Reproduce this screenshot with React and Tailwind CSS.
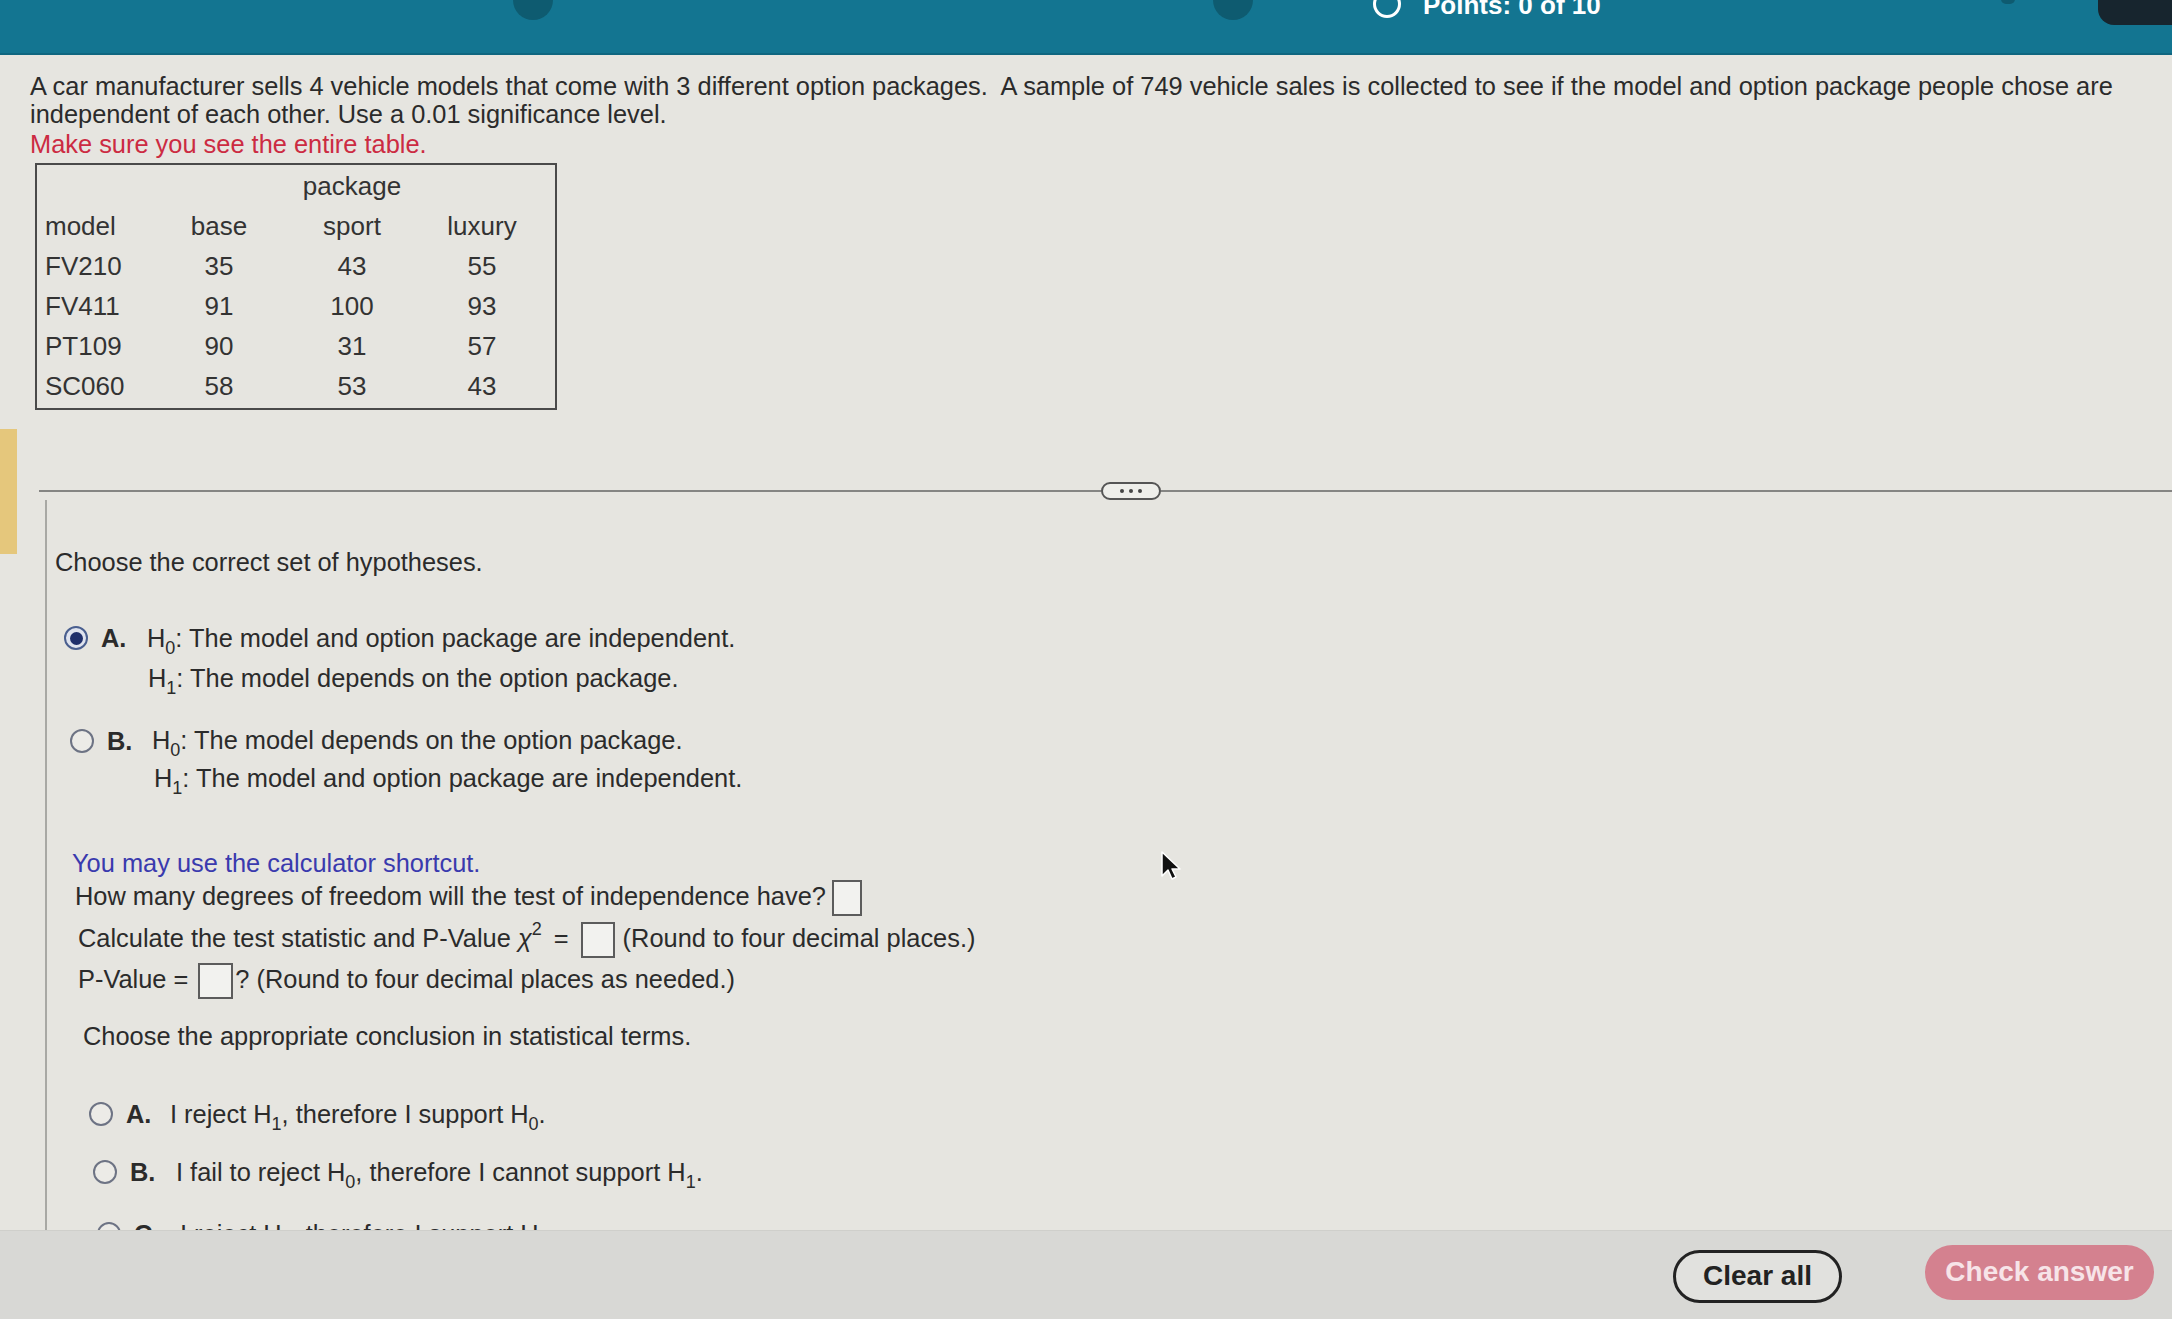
import React from 'react';

const Sub = ({ children }) => <span className="relative top-[7px] text-[18px] leading-none">{children}</span>;

const Radio = ({ selected }) =>
  selected ? (
    <span className="w-[24px] h-[24px] rounded-full border-2 border-[#4a5f8f] bg-[#dfe3ee] flex items-center justify-center shrink-0">
      <span className="w-[13px] h-[13px] rounded-full bg-[#1f2f6b]" />
    </span>
  ) : (
    <span className="w-[24px] h-[24px] rounded-full border-2 border-[#6d7384] bg-[#ecebe7] shrink-0" />
  );

const Box = ({ w = 'w-[32px]' }) => (
  <span className={`inline-block ${w} h-[36px] border-2 border-[#5c5c5c] bg-[#f2f2ef] align-middle`} />
);

const rows = [
  ['FV210', 35, 43, 55],
  ['FV411', 91, 100, 93],
  ['PT109', 90, 31, 57],
  ['SC060', 58, 53, 43],
];

export default function App() {
  return (
    <div className="relative w-[2172px] h-[1319px] overflow-hidden bg-[#e6e5e0] flex flex-col font-['Liberation_Sans',Arial,sans-serif] text-[#2b2b2b]">
      {/* top bar */}
      <div className="h-[55px] shrink-0 bg-[#137591] flex items-start overflow-hidden border-b-2 border-[#0f6680]">
        <span className="ml-[513px] -mt-[20px] w-[40px] h-[40px] rounded-full bg-[#0e5b70]" />
        <span className="ml-[660px] -mt-[20px] w-[40px] h-[40px] rounded-full bg-[#0e5b70]" />
        <span className="ml-[120px] -mt-[10px] w-[28px] h-[28px] rounded-full border-[3px] border-white" />
        <span className="ml-[22px] -mt-[8px] text-[26px] leading-[26px] font-bold text-white">Points: 0 of 10</span>
        <span className="ml-[400px] -mt-[6px] w-[14px] h-[10px] rounded-full bg-[#0e5b70]" />
        <span className="ml-auto w-[74px] h-[25px] rounded-bl-[16px] bg-[#17252e]" />
      </div>

      {/* body */}
      <div className="flex-1 min-h-0 flex overflow-hidden">
        <div className="w-[17px] shrink-0">
          <div className="mt-[374px] h-[125px] bg-[#e5c77c]" />
        </div>

        <div className="flex-1 flex flex-col min-w-0">
          <div className="pl-[13px] pt-[17px]">
            <p className="text-[25.4px] leading-[28px]">
              A car manufacturer sells 4 vehicle models that come with 3 different option packages.{'\u00a0'} A sample of 749 vehicle sales is collected to see if the model and option package people chose are
              <br />
              independent of each other. Use a 0.01 significance level.
            </p>
            <p className="text-[25.4px] leading-[28px] mt-[2px] text-[#cc2b42]">Make sure you see the entire table.</p>

            <div className="ml-[5px] mt-[5px] w-[522px] border-2 border-[#4a4a4a] pt-[1px] pb-[2px] text-[26px] text-[#333]">
              <div className="grid grid-cols-[123px_118px_148px_112px]">
                <div className="h-[40px]" />
                <div className="h-[40px]" />
                <div className="h-[40px] flex items-center justify-center">package</div>
                <div className="h-[40px]" />
                <div className="h-[40px] flex items-center pl-[8px]">model</div>
                <div className="h-[40px] flex items-center justify-center">base</div>
                <div className="h-[40px] flex items-center justify-center">sport</div>
                <div className="h-[40px] flex items-center justify-center">luxury</div>
                {rows.map((r) => (
                  <React.Fragment key={r[0]}>
                    <div className="h-[40px] flex items-center pl-[8px]">{r[0]}</div>
                    <div className="h-[40px] flex items-center justify-center">{r[1]}</div>
                    <div className="h-[40px] flex items-center justify-center">{r[2]}</div>
                    <div className="h-[40px] flex items-center justify-center">{r[3]}</div>
                  </React.Fragment>
                ))}
              </div>
            </div>
          </div>

          {/* divider */}
          <div className="mt-[72px] ml-[22px] h-[18px] flex items-center shrink-0">
            <div className="w-[1062px] h-[2px] bg-[#858583]" />
            <div className="w-[60px] h-[18px] rounded-full border-2 border-[#555] bg-[#eeeeea] flex items-center justify-center gap-[5px]">
              <span className="w-[4px] h-[4px] rounded-full bg-[#444]" />
              <span className="w-[4px] h-[4px] rounded-full bg-[#444]" />
              <span className="w-[4px] h-[4px] rounded-full bg-[#444]" />
            </div>
            <div className="flex-1 h-[2px] bg-[#858583]" />
          </div>

          {/* question */}
          <div className="flex-1 ml-[28px] border-l-2 border-[#a8a8a4] text-[25.4px] overflow-hidden">
            <p className="pl-[8px] mt-[48px] h-[28px] leading-[28px]">Choose the correct set of hypotheses.</p>

            <div className="pl-[17px] mt-[42px] flex items-start">
              <div className="h-[40px] flex items-center"><Radio selected /></div>
              <span className="ml-[13px] w-[46px] h-[40px] leading-[40px] font-bold">A.</span>
              <div className="leading-[40px]">
                <div className="h-[40px]">H<Sub>0</Sub>: The model and option package are independent.</div>
                <div className="h-[40px] pl-[1px]">H<Sub>1</Sub>: The model depends on the option package.</div>
              </div>
            </div>

            <div className="pl-[23px] mt-[23px] flex items-start">
              <div className="h-[40px] flex items-center"><Radio /></div>
              <span className="ml-[13px] w-[45px] h-[40px] leading-[40px] font-bold">B.</span>
              <div className="leading-[38px]">
                <div className="h-[38px]">H<Sub>0</Sub>: The model depends on the option package.</div>
                <div className="h-[38px] pl-[2px]">H<Sub>1</Sub>: The model and option package are independent.</div>
              </div>
            </div>

            <p className="pl-[25px] mt-[52px] h-[28px] leading-[28px] text-[#3a3aae]">You may use the calculator shortcut.</p>
            <div className="pl-[28px] h-[38px] flex items-center">
              How many degrees of freedom will the test of independence have?
              <span className="ml-[6px]"><Box w="w-[30px]" /></span>
            </div>
            <div className="pl-[31px] mt-[2px] h-[42px] flex items-center">
              Calculate the test statistic and P-Value{'\u00a0'}<span className="italic">χ</span>
              <span className="relative -top-[9px] text-[18px] leading-none">2</span>
              <span className="ml-[12px]">=</span>
              <span className="ml-[12px]"><Box w="w-[34px]" /></span>
              <span className="ml-[8px]">(Round to four decimal places.)</span>
            </div>
            <div className="pl-[31px] h-[40px] flex items-center">
              P-Value =
              <span className="ml-[10px]"><Box w="w-[35px]" /></span>
              <span className="ml-[2px]">? (Round to four decimal places as needed.)</span>
            </div>

            <p className="pl-[36px] mt-[23px] h-[28px] leading-[28px]">Choose the appropriate conclusion in statistical terms.</p>

            <div className="pl-[42px] mt-[44px] h-[40px] flex items-center">
              <Radio />
              <span className="ml-[13px] w-[44px] font-bold">A.</span>
              <span>I reject H<Sub>1</Sub>, therefore I support H<Sub>0</Sub>.</span>
            </div>
            <div className="pl-[46px] mt-[18px] h-[40px] flex items-center">
              <Radio />
              <span className="ml-[13px] w-[46px] font-bold">B.</span>
              <span>I fail to reject H<Sub>0</Sub>, therefore I cannot support H<Sub>1</Sub>.</span>
            </div>
            <div className="pl-[50px] mt-[22px] h-[40px] flex items-center">
              <Radio />
              <span className="ml-[13px] w-[46px] font-bold">C.</span>
              <span>I reject H<Sub>0</Sub>, therefore I support H<Sub>1</Sub>.</span>
            </div>
          </div>
        </div>
      </div>

      {/* bottom bar */}
      <div className="h-[89px] shrink-0 bg-[#d8d8d5] border-t border-[#cfcfcb] flex items-center justify-end pr-[18px]">
        <button className="w-[169px] h-[53px] mt-[2px] rounded-full border-[3px] border-[#222] bg-[#e1e1de] text-[28px] font-bold text-[#222]">
          Clear all
        </button>
        <button className="ml-[83px] w-[229px] h-[55px] -mt-[6px] rounded-full bg-[#d4818f] text-[28px] font-bold text-[#f7e4e8]">
          Check answer
        </button>
      </div>

      {/* mouse pointer */}
      <svg className="absolute left-[1160px] top-[850px]" width="22" height="32" viewBox="0 0 22 32">
        <path d="M2 2 L2 26 L8 20 L12 29 L16 27 L12 19 L20 19 Z" fill="#111" stroke="#fff" strokeWidth="1.5" strokeLinejoin="round" />
      </svg>
    </div>
  );
}
